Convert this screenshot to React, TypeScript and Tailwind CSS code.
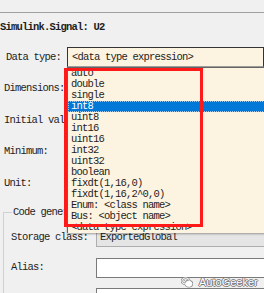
import React from "react";

const mono = { fontFamily: '"Liberation Mono", "Noto Sans CJK SC", monospace' };

const items = [
  "auto",
  "double",
  "single",
  "int8",
  "uint8",
  "int16",
  "uint16",
  "int32",
  "uint32",
  "boolean",
  "fixdt(1,16,0)",
  "fixdt(1,16,2^0,0)",
  "Enum: <class name>",
  "Bus: <object name>",
  "<data type expression>",
];

function Row({ label, children, indent = "pl-[4px]" }: { label: string; children?: React.ReactNode; indent?: string }) {
  return (
    <div className="flex h-[20px] items-center">
      <div className={`w-[67px] shrink-0 whitespace-nowrap overflow-hidden ${indent}`}>{label}</div>
      {children ?? <div className="h-[20px] w-[260px] border border-[#7a7a7a] bg-white" />}
    </div>
  );
}

export default function App() {
  return (
    <div
      className="relative w-[264px] h-[293px] overflow-hidden bg-[#f0f0f0] text-[10.5px] leading-[11px] tracking-[-0.8px] text-[#1e1e1e]"
      style={mono}
    >
      <div className="h-[12px]" />
      <div className="h-px w-full bg-[#a0a0a0]" />
      <div className="mt-[9px] h-[11px] font-bold whitespace-nowrap">Simulink.Signal: U2</div>

      <div className="mt-[14px] flex flex-col gap-[11.5px]">
        <Row label="Data type:" indent="pl-[6px]">
          <div className="flex h-[20px] w-[260px] items-center border border-[#333] border-b-[#a0a0a0] bg-[#fdf3e1] pl-[4px] whitespace-nowrap">
            &lt;data type expression&gt;
          </div>
        </Row>
        <Row label="Dimensions:" />
        <Row label="Initial value:" />
        <Row label="Minimum:" />
        <Row label="Unit:" />
      </div>

      <fieldset className="mt-[14px] ml-[3px] w-[320px] border border-[#d0d0d0] pl-[8px] pt-[9px]">
        <legend className="px-[1px] h-[11px] whitespace-nowrap">Code generation</legend>
        <div className="flex flex-col gap-[10.5px] ml-[-1px]">
          <div className="flex h-[20px] items-center">
            <div className="w-[85px] shrink-0 whitespace-nowrap">Storage class:</div>
            <div className="flex h-[20px] w-[230px] items-center border border-[#adadad] bg-[#e5e5e5] pl-[3px] whitespace-nowrap">
              ExportedGlobal
            </div>
          </div>
          <div className="flex h-[20px] items-center">
            <div className="w-[85px] shrink-0 whitespace-nowrap">Alias:</div>
            <div className="h-[20px] w-[230px] border border-[#7a7a7a] bg-white" />
          </div>
          <div className="flex h-[20px] items-center">
            <div className="w-[85px] shrink-0 whitespace-nowrap">Alignment:</div>
            <div className="h-[20px] w-[230px] border border-[#7a7a7a] bg-white" />
          </div>
        </div>
      </fieldset>

      {/* dropdown list */}
      <div className="absolute left-[67px] top-[67px] w-[220px] h-[166px] border-l border-t border-[#646464] bg-[#fdf3e1] shadow-[0_1px_2px_rgba(0,0,0,0.35)]">
        {items.map((it) =>
          it === "int8" ? (
            <div
              key={it}
              className="h-[11px] bg-[#0078d7] pl-[3px] text-white whitespace-nowrap outline-1 outline-dotted outline-[#9cc8ef] -outline-offset-1"
            >
              {it}
            </div>
          ) : (
            <div key={it} className="h-[11px] pl-[3px] whitespace-nowrap">
              {it}
            </div>
          )
        )}
      </div>

      {/* red annotation box */}
      <div className="absolute left-[64px] top-[68px] w-[139px] h-[159px] border-[3px] border-[#ff1a1a]" />

      {/* watermark */}
      <div className="absolute left-[181px] top-[277px] flex items-center gap-[6px]">
        <svg width="12" height="11" viewBox="0 0 12 11" fill="none">
          <g stroke="#8a8a8a" strokeWidth="2.2">
            <ellipse cx="4.6" cy="4" rx="3.8" ry="3.1" />
            <ellipse cx="7.8" cy="6.8" rx="3.2" ry="2.6" />
          </g>
          <g stroke="#ffffff" strokeWidth="0.9">
            <ellipse cx="4.6" cy="4" rx="3.8" ry="3.1" />
            <ellipse cx="7.8" cy="6.8" rx="3.2" ry="2.6" fill="#ffffff" />
          </g>
          <circle cx="3.3" cy="3.3" r="0.6" fill="#8a8a8a" />
          <circle cx="5.9" cy="3.3" r="0.6" fill="#8a8a8a" />
        </svg>
        <span
          className="text-[11px] leading-[11px] tracking-[0px] text-white"
          style={{
            fontFamily: '"Liberation Sans", Arial, sans-serif',
            textShadow:
              "1px 0 0 #7a7a7a, -1px 0 0 #7a7a7a, 0 1px 0 #7a7a7a, 0 -1px 0 #7a7a7a",
          }}
        >
          AutoGeeker
        </span>
      </div>
    </div>
  );
}
